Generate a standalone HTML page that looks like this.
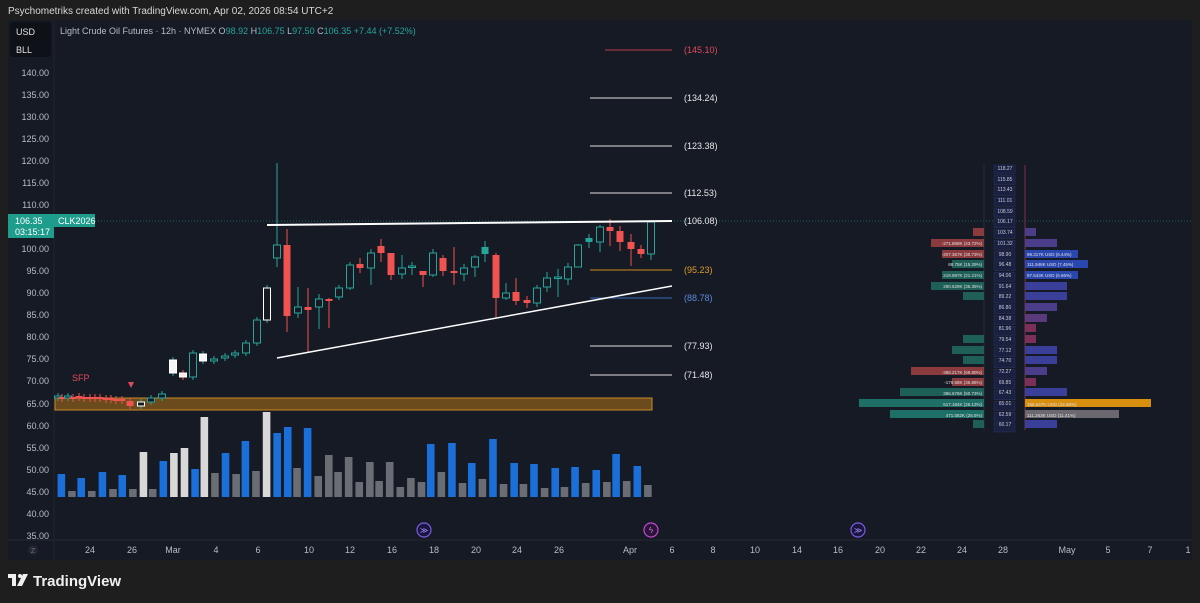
<!DOCTYPE html>
<html><head><meta charset="utf-8">
<style>
html,body{margin:0;padding:0;width:1200px;height:603px;background:#1e1e1e;overflow:hidden;font-family:"Liberation Sans",sans-serif}
.t{position:absolute;white-space:nowrap}
#hdr{left:8px;top:6px;font-size:10px;color:#d8d8d8}
#chart{position:absolute;left:8px;top:20px;width:1184px;height:540px;background:#161a25}
</style></head><body>
<div class="t" id="hdr">Psychometriks created with TradingView.com, Apr 02, 2026 08:54 UTC+2</div>
<div id="chart"></div>
<svg id="s" width="1200" height="603" style="position:absolute;left:0;top:0" font-family="Liberation Sans, sans-serif">
<rect x="8" y="540" width="1184" height="20" fill="#161a25"/>
<line x1="8" y1="540" x2="1192" y2="540" stroke="#242834"/>
<line x1="54" y1="20" x2="54" y2="560" stroke="#20242e"/>
<rect x="10" y="22" width="41" height="35" rx="3" fill="#0f1118"/>
<text x="16" y="35" font-size="9" fill="#e0e0e0">USD</text>
<text x="16" y="53" font-size="9" fill="#e0e0e0">BLL</text>
<text x="60" y="34" font-size="9" fill="#b8bcc6">Light Crude Oil Futures · 12h · NYMEX  O<tspan fill="#26a69a">98.92</tspan>  H<tspan fill="#26a69a">106.75</tspan>  L<tspan fill="#26a69a">97.50</tspan>  C<tspan fill="#26a69a">106.35</tspan>  <tspan fill="#26a69a">+7.44 (+7.52%)</tspan></text>
<g font-size="9" fill="#b8bcc6" text-anchor="end">
<text x="49" y="76">140.00</text><text x="49" y="98">135.00</text><text x="49" y="120">130.00</text><text x="49" y="142">125.00</text><text x="49" y="164">120.00</text><text x="49" y="186">115.00</text><text x="49" y="208">110.00</text><text x="49" y="252">100.00</text><text x="49" y="274">95.00</text><text x="49" y="296">90.00</text><text x="49" y="318">85.00</text><text x="49" y="340">80.00</text><text x="49" y="362">75.00</text><text x="49" y="384">70.00</text><text x="49" y="407">65.00</text><text x="49" y="429">60.00</text><text x="49" y="451">55.00</text><text x="49" y="473">50.00</text><text x="49" y="495">45.00</text><text x="49" y="517">40.00</text><text x="49" y="539">35.00</text>
</g>
<line x1="95" y1="221" x2="1192" y2="221" stroke="#26a69a" stroke-width="0.6" stroke-dasharray="1 2"/>
<rect x="8" y="214" width="46" height="24" fill="#1e9c8c"/>
<rect x="54" y="214" width="41" height="13" fill="#1e9c8c"/>
<text x="15" y="224" font-size="9" fill="#fff">106.35</text>
<text x="15" y="235" font-size="9" fill="#fff">03:15:17</text>
<text x="58" y="224" font-size="9" fill="#fff">CLK2026</text>
<rect x="55" y="398" width="597" height="12" fill="#6b4a1c" stroke="#c98a2a" stroke-width="1"/>
<g id="vol"></g>
<g id="cdl"></g>
<g stroke-width="1">
<line x1="605" y1="50" x2="672" y2="50" stroke="#c0394a"/>
<line x1="590" y1="98" x2="672" y2="98" stroke="#e0e0e0"/>
<line x1="590" y1="146" x2="672" y2="146" stroke="#e0e0e0"/>
<line x1="590" y1="193" x2="672" y2="193" stroke="#e0e0e0"/>
<line x1="590" y1="270" x2="672" y2="270" stroke="#d08a20"/>
<line x1="590" y1="298" x2="672" y2="298" stroke="#3a68b8"/>
<line x1="590" y1="346" x2="672" y2="346" stroke="#e0e0e0"/>
<line x1="590" y1="375" x2="672" y2="375" stroke="#e0e0e0"/>
</g>
<line x1="267" y1="225" x2="672" y2="221" stroke="#fff" stroke-width="2"/>
<line x1="277" y1="358" x2="672" y2="286" stroke="#fff" stroke-width="1.5"/>
<g font-size="9">
<text x="684" y="53" fill="#e04a5a">(145.10)</text>
<text x="684" y="101" fill="#e8e8e8">(134.24)</text>
<text x="684" y="149" fill="#e8e8e8">(123.38)</text>
<text x="684" y="196" fill="#e8e8e8">(112.53)</text>
<text x="684" y="224" fill="#e8e8e8">(106.08)</text>
<text x="684" y="273" fill="#e09a2a">(95.23)</text>
<text x="684" y="301" fill="#5a8ad8">(88.78)</text>
<text x="684" y="349" fill="#e8e8e8">(77.93)</text>
<text x="684" y="378" fill="#e8e8e8">(71.48)</text>
</g>
<text x="72" y="381" font-size="9" fill="#e04a5a">SFP</text>
<polygon points="128,382 134,382 131,388" fill="#e04a5a"/>
<line x1="984" y1="165" x2="984" y2="430" stroke="#2a2e3a"/>
<line x1="1025" y1="165" x2="1025" y2="430" stroke="#7a3048"/>
<g id="vp"></g>
<g font-size="4.5" fill="#e0e0e0" text-anchor="end">
<text x="982" y="245">-271.868K (43.72%)</text><text x="982" y="256">-207.367K (30.73%)</text><text x="982" y="266">88.75K (15.29%)</text><text x="982" y="277">219.987K (21.21%)</text><text x="982" y="288">290.529K (35.35%)</text><text x="982" y="374">-388.217K (69.80%)</text><text x="982" y="384">-179.68K (35.86%)</text><text x="982" y="395">396.676K (50.73%)</text><text x="982" y="406">617.184K (26.13%)</text><text x="982" y="417">471.082K (26.5%)</text>
</g>
<g font-size="4.5" fill="#e0e0e0">
<text x="1027" y="256">99.317K USD (6.44%)</text><text x="1027" y="266">111.948K USD (7.45%)</text><text x="1027" y="277">97.543K USD (6.66%)</text><text x="1027" y="406">158.547K USD (15.65%)</text><text x="1027" y="417">111.263K USD (11.41%)</text>
</g>
<g font-size="5" fill="#c8ccd8" text-anchor="middle">
<text x="1005" y="170">118.27</text><text x="1005" y="181">115.85</text><text x="1005" y="191">113.43</text><text x="1005" y="202">111.01</text><text x="1005" y="213">108.59</text><text x="1005" y="223">106.17</text><text x="1005" y="234">103.74</text><text x="1005" y="245">101.32</text><text x="1005" y="256">98.90</text><text x="1005" y="266">96.48</text><text x="1005" y="277">94.06</text><text x="1005" y="288">91.64</text><text x="1005" y="298">89.22</text><text x="1005" y="309">86.80</text><text x="1005" y="320">84.38</text><text x="1005" y="330">81.96</text><text x="1005" y="341">79.54</text><text x="1005" y="352">77.12</text><text x="1005" y="362">74.70</text><text x="1005" y="373">72.27</text><text x="1005" y="384">69.85</text><text x="1005" y="394">67.43</text><text x="1005" y="405">65.01</text><text x="1005" y="416">62.59</text><text x="1005" y="426">60.17</text>
</g>
<circle cx="424" cy="530" r="7" fill="#1a1440" stroke="#7a5ce0" stroke-width="1.2"/>
<text x="424" y="533" font-size="8" fill="#a890ff" text-anchor="middle">≫</text>
<circle cx="651" cy="530" r="7" fill="#2a1438" stroke="#c048d0" stroke-width="1.2"/>
<text x="651" y="533" font-size="8" fill="#e070f0" text-anchor="middle">ϟ</text>
<circle cx="858" cy="530" r="7" fill="#1a1440" stroke="#7a5ce0" stroke-width="1.2"/>
<text x="858" y="533" font-size="8" fill="#a890ff" text-anchor="middle">≫</text>
<circle cx="33" cy="550" r="5" fill="#232632"/>
<text x="33" y="553" font-size="7" fill="#70747e" text-anchor="middle">Z</text>
<g font-size="9" fill="#b8bcc6" text-anchor="middle">
<text x="90" y="553">24</text><text x="132" y="553">26</text><text x="173" y="553">Mar</text><text x="216" y="553">4</text><text x="258" y="553">6</text><text x="309" y="553">10</text><text x="350" y="553">12</text><text x="392" y="553">16</text><text x="434" y="553">18</text><text x="476" y="553">20</text><text x="517" y="553">24</text><text x="559" y="553">26</text><text x="630" y="553">Apr</text><text x="672" y="553">6</text><text x="713" y="553">8</text><text x="755" y="553">10</text><text x="797" y="553">14</text><text x="838" y="553">16</text><text x="880" y="553">20</text><text x="921" y="553">22</text><text x="962" y="553">24</text><text x="1003" y="553">28</text><text x="1067" y="553">May</text><text x="1108" y="553">5</text><text x="1150" y="553">7</text><text x="1188" y="553">1</text>
</g>
<g fill="#f0f0f0">
<rect x="8" y="574" width="8" height="4"/><rect x="12" y="574" width="4" height="12"/>
<circle cx="20" cy="576" r="2"/><polygon points="23,574 28,574 22,586 17,586"/>
</g>
<text x="33" y="586" font-size="15" fill="#f0f0f0" font-weight="bold">TradingView</text>
</svg>
<script>
var NS="http://www.w3.org/2000/svg";
function el(g,t,a){var e=document.createElementNS(NS,t);for(var k in a)e.setAttribute(k,a[k]);document.getElementById(g).appendChild(e);}
var v=[[44,474,'b'],[52,491,'g'],[59,478,'b'],[67,491,'g'],[75,472,'b'],[83,489,'g'],[90,475,'b'],[98,489,'g'],[106,452,'w'],[113,489,'g'],[121,461,'b'],[129,453,'w'],[137,448,'w'],[145,469,'b'],[152,417,'w'],[160,473,'g'],[168,453,'b'],[176,474,'g'],[183,441,'b'],[191,471,'g'],[199,412,'w'],[207,433,'b'],[215,427,'b'],[222,468,'g'],[230,428,'b'],[238,476,'g'],[246,455,'g'],[253,472,'g'],[261,457,'g'],[269,482,'g'],[277,462,'g'],[284,481,'g'],[292,462,'g'],[300,487,'g'],[308,478,'g'],[316,482,'g'],[323,444,'b'],[331,472,'g'],[339,443,'b'],[347,483,'g'],[354,463,'b'],[362,479,'g'],[370,439,'b'],[378,484,'g'],[386,463,'b'],[393,484,'g'],[401,464,'b'],[409,488,'g'],[417,468,'b'],[424,487,'g'],[432,467,'b'],[440,483,'g'],[448,470,'b'],[456,482,'g'],[463,454,'b'],[471,481,'g'],[479,466,'b'],[487,485,'g']];
var vc={b:'#1a6fd8',g:'#6a6d74',w:'#d8d8d8'};
v.forEach(function(d){var x=d[0]*1.324+3.1;el('vol','rect',{x:x-3.8,y:d[1],width:7.6,height:497-d[1],fill:vc[d[2]]});});
var c=[[58,396,398,'g'],[62,397,399,'r'],[68,396,398,'g'],[73,397,399,'r'],[79,396,398,'r'],[84,397,399,'r'],[90,397,399,'r'],[95,397,399,'r'],[100,397,399,'r'],[106,398,400,'r'],[111,398,400,'r'],[116,399,401,'r'],[122,399,401,'r'],[130,401,406,'r'],[141,402,406,'w0'],[151,398,402,'g'],[162,394,398,'g'],
[173,360,373,'w'],[183,373,377,'wr'],[193,353,377,'g'],[203,354,361,'w'],[214,359,361,'g'],[225,356,358,'g'],[235,353,355,'g'],[246,343,353,'g'],[257,320,343,'g'],[267,288,320,'w0'],[277,245,258,'g',163,267],[287,245,316,'r',229,332],[298,307,313,'g',287,318],[308,307,310,'r',288,352],[319,299,307,'g',294,329],[329,299,301,'r',298,328],[339,288,297,'g',285,300],[350,265,288,'g',262,290],[360,264,268,'r',258,273],[371,253,268,'g',249,285],[381,246,253,'r',239,262],[391,253,275,'r',253,280],[402,268,274,'g',255,279],[412,266,267,'g',262,275],[423,271,275,'r',271,287],[433,253,275,'g',249,277],[443,258,271,'r',255,276],[454,271,273,'r',247,285],[464,268,274,'g',264,281],[475,257,267,'g',255,277],[485,247,254,'t',241,262],[496,255,298,'r',253,317],[506,293,298,'g',283,300],[516,292,301,'r',278,305],[527,300,303,'r',296,308],[537,288,303,'g',285,307],[547,278,287,'g',272,292],[558,277,278,'g',269,297],[568,267,279,'g',263,285],[578,245,267,'g',244,267],[589,238,242,'t',234,248],[600,227,242,'g',225,252],[610,227,231,'r',219,246],[620,231,242,'r',226,251],[631,242,249,'r',234,266],[641,249,254,'r',245,258],[651,222,254,'g',220,260]];
c.forEach(function(d){var x=d[0],t=d[1],b=d[2],k=d[3];var wt=d[4]||t-3,wb=d[5]||b+3;
var col={g:'#26a69a',t:'#26a69a',r:'#f05350',w:'#ffffff',w0:'#ffffff',wr:'#ffffff'}[k];
var wc=(k=='r'||k=='wr')?'#f05350':'#26a69a';
el('cdl','line',{x1:x,y1:wt,x2:x,y2:wb,stroke:wc,'stroke-width':1});
var f=(k=='r'?'#f05350':k=='t'?'#26a69a':k=='w'?'#f4f4f4':k=='wr'?'#ffe8ea':'#161a25');
el('cdl','rect',{x:x-3.5,y:t,width:7,height:Math.max(b-t,1.5),fill:f,stroke:(k=='r'||k=='t')?'none':col,'stroke-width':1});});
var rows=[[103.74,234,11,'#8b3a3e',11,'#4b3d8a'],[101.32,245,53,'#8b3a3e',32,'#4b3d8a'],[98.90,256,42,'#8b3a3e',53,'#2a47b0'],[96.48,266,32,'#1e5f58',63,'#2a47b0'],[94.06,277,42,'#1e5f58',53,'#2a47b0'],[91.64,288,53,'#1e5f58',42,'#3a3f9a'],[89.22,298,21,'#1e5f58',42,'#3a3f9a'],[86.80,309,0,'',32,'#4b3d8a'],[84.38,320,0,'',22,'#5a3a7a'],[81.96,330,0,'',11,'#7a3058'],[79.54,341,21,'#1e5f58',11,'#7a3058'],[77.12,352,32,'#1e5f58',32,'#3a3f9a'],[74.70,362,21,'#1e5f58',32,'#3a3f9a'],[72.27,373,73,'#8b3a3e',22,'#4b3d8a'],[69.85,384,32,'#8b3a3e',11,'#7a3058'],[67.43,394,84,'#1e5f58',42,'#3a3f9a'],[65.01,405,125,'#1e6f68',126,'#d88f10'],[62.59,416,94,'#1e6f68',94,'#6c6870'],[60.17,426,11,'#1e5f58',32,'#3a3f9a']];
for(var i=0;i<25;i++){el('vp','rect',{x:994,y:165+i*10.75,width:21,height:9,fill:'#1a2040',stroke:'#2a3266','stroke-width':0.5});}
rows.forEach(function(r){var y=r[1]-6;if(r[2])el('vp','rect',{x:984-r[2],y:y,width:r[2],height:8,fill:r[3]});el('vp','rect',{x:1025,y:y,width:r[4],height:8,fill:r[5]});});
</script>
</body></html>
